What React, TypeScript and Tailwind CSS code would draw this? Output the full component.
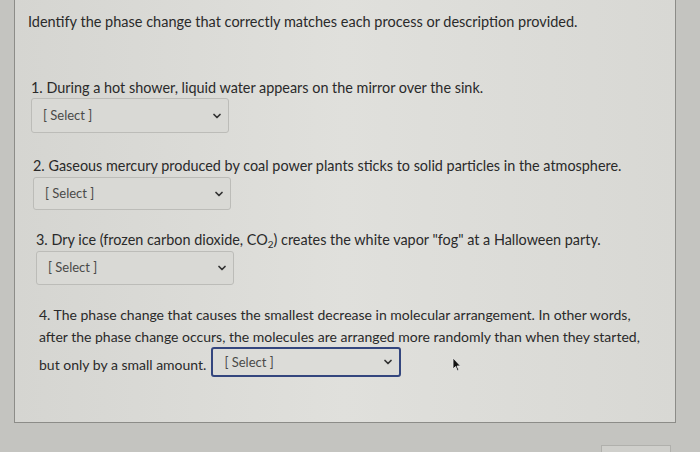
import { ChevronDown } from 'lucide-react';

const font = { fontFamily: "Lato, 'Open Sans', sans-serif" };

function Select({ focused = false, width = 'w-[198px]', height = 'h-[34px]' }: { focused?: boolean; width?: string; height?: string }) {
  return (
    <div
      className={`${width} ${height} flex items-center justify-between pl-[11px] pr-[5px] rounded-[3px] ${
        focused ? 'border-2 border-[#34467e] bg-[#dcdcd8]' : 'border border-[#bcbcb8] bg-[#d9d9d5]'
      }`}
    >
      <span className="text-[13px] text-[#4a4a48]">[ Select ]</span>
      <ChevronDown className="w-[12px] h-[12px] text-[#333]" strokeWidth={3.5} />
    </div>
  );
}

export default function App() {
  return (
    <div className="w-[700px] h-[452px] bg-[#c4c4c0] overflow-hidden relative" style={font}>
      <div className="flex flex-col h-full">
        {/* question card */}
        <div className="ml-[14px] mr-[24px] h-[423px] border-x border-b border-[#8c8c88] bg-gradient-to-r from-[#d5d5d1] via-[#e0e0dc] to-[#d8d8d4] text-[#2a2a2a] text-[14.4px]">
          <p className="pl-[13px] pt-[12px] text-[14.5px] leading-[20px] whitespace-nowrap">
            Identify the phase change that correctly matches each process or description provided.
          </p>

          <div className="pl-[16px] pt-[46px]">
            <p className="leading-[20px] whitespace-nowrap">
              1. During a hot shower, liquid water appears on the mirror over the sink.
            </p>
            <Select height="h-[35px]" />
          </div>

          <div className="pl-[18px] pt-[23px]">
            <p className="leading-[20px] whitespace-nowrap">
              2. Gaseous mercury produced by coal power plants sticks to solid particles in the atmosphere.
            </p>
            <div className="mt-[1px]">
              <Select height="h-[33px]" />
            </div>
          </div>

          <div className="pl-[21px] pt-[20px]">
            <p className="leading-[20px] whitespace-nowrap">
              3. Dry ice (frozen carbon dioxide, CO<sub className="text-[10px]">2</sub>) creates the white vapor "fog" at a Halloween party.
            </p>
            <div className="mt-[1px]">
              <Select height="h-[34px]" />
            </div>
          </div>

          <div className="pl-[24px] pt-[19px] text-[14px] leading-[22px]">
            <p className="whitespace-nowrap">
              4. The phase change that causes the smallest decrease in molecular arrangement. In other words,
            </p>
            <p className="whitespace-nowrap">
              after the phase change occurs, the molecules are arranged more randomly than when they started,
            </p>
            <div className="flex items-end gap-[5px] -mt-[1px]">
              <span className="pb-[1px] whitespace-nowrap">but only by a small amount.</span>
              <Select focused width="w-[190px]" height="h-[30px]" />
            </div>
          </div>
        </div>

        {/* footer strip with the edge of a button */}
        <div className="flex-1 flex items-end justify-end pr-[29px]">
          <div className="w-[70px] h-[7px] border-x border-t border-[#b0b0ac] bg-[#cfcfcb]" />
        </div>
      </div>

      {/* mouse pointer */}
      <svg className="absolute left-[452px] top-[357px]" width="10" height="15" viewBox="0 0 10 15">
        <path d="M1 1 L1 12 L3.5 9.5 L5.5 14 L7 13.3 L5 9 L8.5 9 Z" fill="#111" stroke="#eee" strokeWidth="0.8" />
      </svg>
    </div>
  );
}
